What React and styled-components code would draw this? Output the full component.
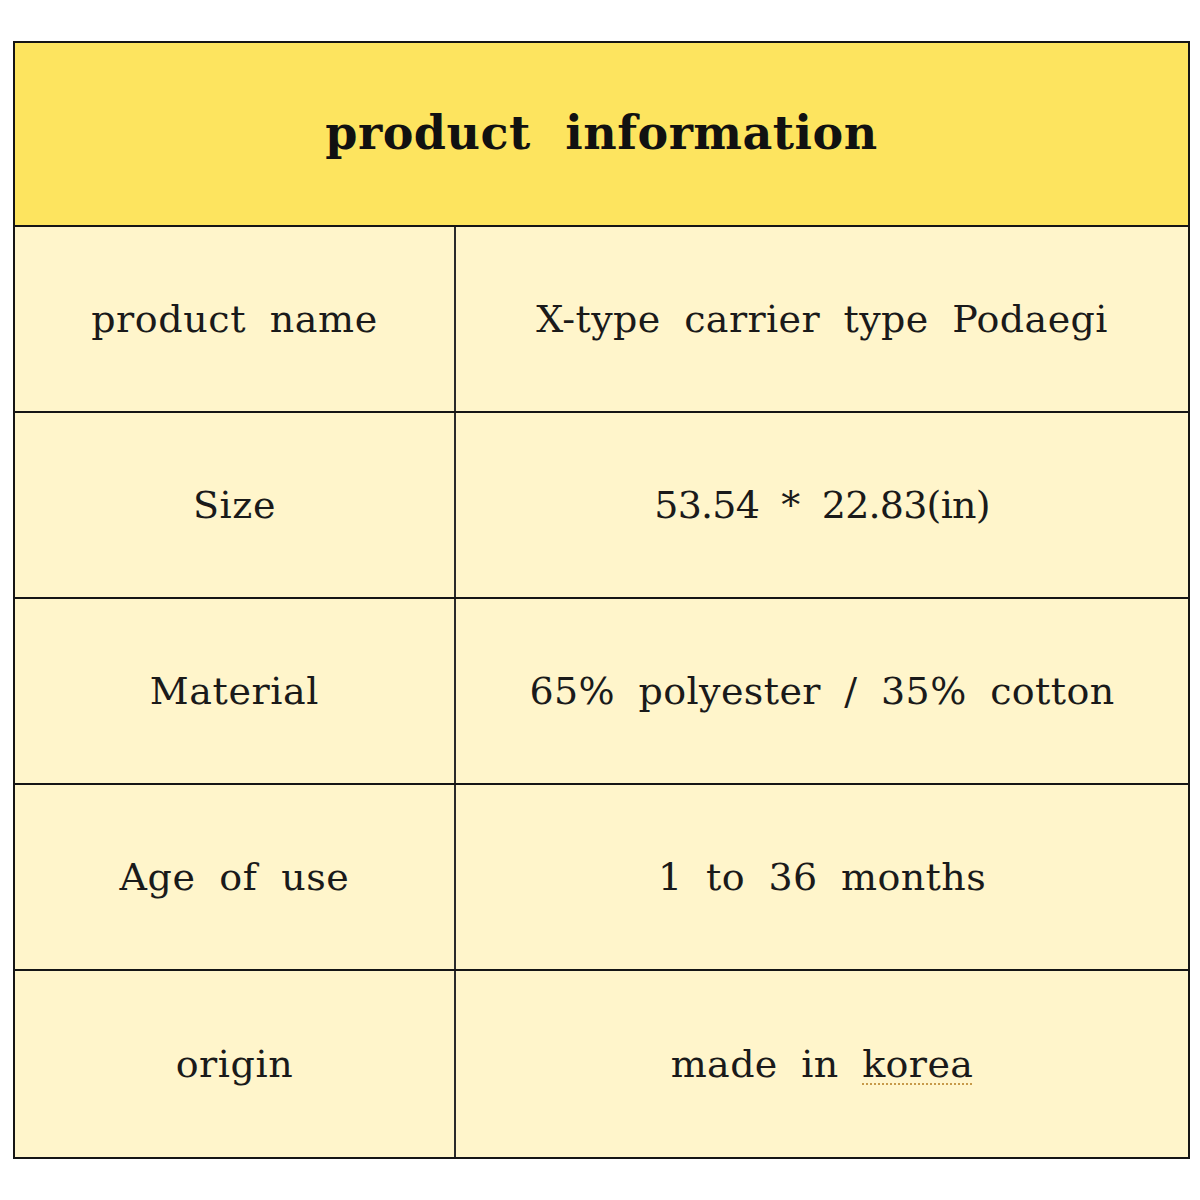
import React from "react";
import styled, { createGlobalStyle } from "styled-components";

const rows = [
  { label: "product name", value: "X-type carrier type Podaegi" },
  { label: "Size", value: "53.54 * 22.83(in)", tight: true },
  { label: "Material", value: "65% polyester / 35% cotton" },
  { label: "Age of use", value: "1 to 36 months" },
  { label: "origin", value: "made in", mark: "korea" },
];

export default function App() {
  return (
    <>
      <GlobalStyle />
      <Page>
        <InfoTable>
          <Header>product information</Header>
          {rows.map((row, i) => (
            <Row key={i} $last={i === rows.length - 1}>
              <LabelCell>{row.label}</LabelCell>
              <ValueCell $tight={row.tight}>
                {row.value}
                {row.mark && (
                  <>
                    {" "}
                    <Marked>{row.mark}</Marked>
                  </>
                )}
              </ValueCell>
            </Row>
          ))}
        </InfoTable>
      </Page>
    </>
  );
}

const GlobalStyle = createGlobalStyle`
  body {
    margin: 0;
    background: #ffffff;
    font-family: "DejaVu Serif", "Liberation Serif", serif;
  }
`;

const Page = styled.div`
  width: 1200px;
  height: 1200px;
  padding: 41px 10px 0 13px;
  box-sizing: border-box;
`;

const InfoTable = styled.div`
  width: 1177px;
  border: 2px solid #151515;
  box-sizing: border-box;
  display: flex;
  flex-direction: column;
`;

const Header = styled.div`
  height: 184px;
  background: #fde45f;
  border-bottom: 2px solid #151515;
  display: flex;
  align-items: center;
  justify-content: center;
  font-size: 46px;
  font-weight: bold;
  letter-spacing: 0.5px;
  word-spacing: 18px;
  color: #111;
  padding-bottom: 2px;
  box-sizing: border-box;
`;

const Row = styled.div`
  display: grid;
  grid-template-columns: 441px 1fr;
  height: 186px;
  background: #fff5cb;
  border-bottom: ${(p) => (p.$last ? "none" : "2px solid #151515")};
  box-sizing: border-box;
`;

const Cell = styled.div`
  display: flex;
  align-items: center;
  justify-content: center;
  font-size: 38px;
  letter-spacing: 0.6px;
  word-spacing: 11px;
  color: #1a1a1a;
`;

const LabelCell = styled(Cell)`
  border-right: 2px solid #2a2a2a;
`;

const ValueCell = styled(Cell)`
  white-space: pre;
  letter-spacing: ${(p) => (p.$tight ? "-0.8px" : "0.4px")};
`;

const Marked = styled.span`
  text-decoration: underline dotted #c79a4a;
  text-underline-offset: 6px;
  text-decoration-thickness: 2px;
`;
